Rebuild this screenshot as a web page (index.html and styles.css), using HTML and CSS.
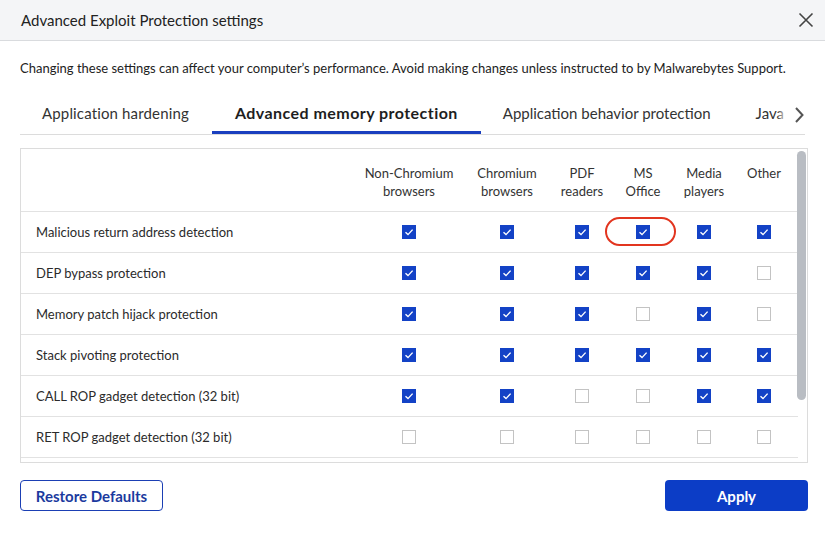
FILE: index.html
```html
<!DOCTYPE html>
<html lang="en">

<head>
    <meta charset="UTF-8">
    <meta name="viewport" content="width=device-width, initial-scale=1.0">
    <title>Advanced Exploit Protection settings</title>

    <link rel="stylesheet" href="styles.css">
</head>

<body>
    <div class="titlebar">
        <span class="title">Advanced Exploit Protection settings</span>
        <svg class="close" width="16" height="16" viewBox="0 0 16 16">
            <path d="M1.5 1.5 L14.5 14.5 M14.5 1.5 L1.5 14.5" stroke="#444" stroke-width="1.6" fill="none" />
        </svg>
    </div>

    <p class="desc">Changing these settings can affect your computer’s performance. Avoid making changes unless instructed to by Malwarebytes Support.</p>

    <div class="tabs">
        <div class="tab-strip">
            <span class="tab first">Application hardening</span>
            <span class="tab active">Advanced memory protection</span>
            <span class="tab">Application behavior protection</span>
            <span class="tab">Java</span>
        </div>
        <div class="tab-more">
            <svg width="12" height="18" viewBox="0 0 12 18">
                <path d="M3 2 L9.5 9 L3 16" stroke="#555" stroke-width="2" fill="none" />
            </svg>
        </div>
    </div>

    <div class="table-box">
        <div class="grid head">
            <div class="label"></div>
            <div class="col">Non-Chromium<br>browsers</div>
            <div class="col">Chromium<br>browsers</div>
            <div class="col">PDF<br>readers</div>
            <div class="col">MS<br>Office</div>
            <div class="col">Media<br>players</div>
            <div class="col">Other</div>
        </div>

        <div class="grid row">
            <div class="label">Malicious return address detection</div>
            <div class="cell"><span class="box on"></span></div>
            <div class="cell"><span class="box on"></span></div>
            <div class="cell"><span class="box on"></span></div>
            <div class="cell"><span class="box on"></span><span class="ring"></span></div>
            <div class="cell"><span class="box on"></span></div>
            <div class="cell"><span class="box on"></span></div>
        </div>

        <div class="grid row">
            <div class="label">DEP bypass protection</div>
            <div class="cell"><span class="box on"></span></div>
            <div class="cell"><span class="box on"></span></div>
            <div class="cell"><span class="box on"></span></div>
            <div class="cell"><span class="box on"></span></div>
            <div class="cell"><span class="box on"></span></div>
            <div class="cell"><span class="box"></span></div>
        </div>

        <div class="grid row">
            <div class="label">Memory patch hijack protection</div>
            <div class="cell"><span class="box on"></span></div>
            <div class="cell"><span class="box on"></span></div>
            <div class="cell"><span class="box on"></span></div>
            <div class="cell"><span class="box"></span></div>
            <div class="cell"><span class="box on"></span></div>
            <div class="cell"><span class="box"></span></div>
        </div>

        <div class="grid row">
            <div class="label">Stack pivoting protection</div>
            <div class="cell"><span class="box on"></span></div>
            <div class="cell"><span class="box on"></span></div>
            <div class="cell"><span class="box on"></span></div>
            <div class="cell"><span class="box on"></span></div>
            <div class="cell"><span class="box on"></span></div>
            <div class="cell"><span class="box on"></span></div>
        </div>

        <div class="grid row">
            <div class="label">CALL ROP gadget detection (32 bit)</div>
            <div class="cell"><span class="box on"></span></div>
            <div class="cell"><span class="box on"></span></div>
            <div class="cell"><span class="box"></span></div>
            <div class="cell"><span class="box"></span></div>
            <div class="cell"><span class="box on"></span></div>
            <div class="cell"><span class="box on"></span></div>
        </div>

        <div class="grid row">
            <div class="label">RET ROP gadget detection (32 bit)</div>
            <div class="cell"><span class="box"></span></div>
            <div class="cell"><span class="box"></span></div>
            <div class="cell"><span class="box"></span></div>
            <div class="cell"><span class="box"></span></div>
            <div class="cell"><span class="box"></span></div>
            <div class="cell"><span class="box"></span></div>
        </div>

        <div class="grid row last">
            <div class="label"></div>
        </div>

        <div class="scrollbar"></div>
    </div>

    <div class="actions">
        <button type="button" class="btn outline">Restore Defaults</button>
        <button type="button" class="btn primary">Apply</button>
    </div>
</body>

</html>
```

FILE: styles.css
```css
body {
    margin: 0;
    background: #fff;
    font-family: Lato, "Noto Sans", sans-serif;
    color: #2b2b2b;
}

.titlebar {
    height: 40px;
    padding: 0 11px 0 21px;
    display: flex;
    align-items: center;
    justify-content: space-between;
    background: #f4f5f7;
    border-bottom: 1px solid #d9dbde;
}

.title {
    font-size: 15px;
    color: #222;
}

.desc {
    margin: 0;
    padding: 18px 20px 0;
    font-size: 13px;
    line-height: 18px;
    color: #222;
}

.tabs {
    position: relative;
    margin: 12px 20px 0;
    width: 785px;
    border-bottom: 1px solid #dcdcdc;
    overflow: hidden;
}

.tab-strip {
    display: flex;
    white-space: nowrap;
}

.tab {
    padding: 14px 23px 8px 22px;
    font-size: 15px;
    line-height: 20px;
    color: #333;
    border-bottom: 3px solid transparent;
}

.tab.first {
    letter-spacing: 0.15px;
}

.tab.active {
    font-size: 16px;
    font-weight: bold;
    letter-spacing: 0.45px;
    color: #1e1e1e;
    border-bottom-color: #1a3fbf;
    padding-left: 23px;
}

.tab-more {
    position: absolute;
    right: 0;
    top: 0;
    bottom: 0;
    width: 40px;
    display: flex;
    align-items: center;
    justify-content: flex-end;
    padding-top: 6px;
    box-sizing: border-box;
    background: linear-gradient(to right, rgba(255, 255, 255, 0) 0, rgba(255, 255, 255, 0) 12px, rgba(255, 255, 255, 0.8) 20px, #fff 26px);
}

.table-box {
    position: relative;
    margin: 13px 0 0 20px;
    width: 786px;
    height: 313px;
    border: 1px solid #dcdcdc;
    overflow: hidden;
}

.grid {
    display: grid;
    grid-template-columns: 339px 98px 98px 52px 70px 52px 68px;
    width: 777px;
}

.head {
    height: 62px;
    box-sizing: border-box;
    padding-top: 15px;
    font-size: 13px;
    line-height: 18px;
    color: #333;
}

.col {
    text-align: center;
}

.row {
    height: 40px;
    align-items: center;
    border-top: 1px solid #e2e2e2;
    font-size: 13px;
    color: #2b2b2b;
}

.label {
    padding-left: 15px;
}

.cell {
    position: relative;
    display: flex;
    justify-content: center;
}

.box {
    width: 14px;
    height: 14px;
    box-sizing: border-box;
    border: 1px solid #c3c3c3;
    background: #fff;
}

.box.on {
    border: none;
    background: #1342c6 url("data:image/svg+xml,%3Csvg xmlns='http://www.w3.org/2000/svg' width='14' height='14'%3E%3Cpath d='M3.5 7.3 L6 9.6 L10.6 4.6' stroke='white' stroke-width='1.4' fill='none'/%3E%3C/svg%3E") no-repeat center;
}

.ring {
    position: absolute;
    left: -3px;
    top: -8px;
    width: 71px;
    height: 29px;
    box-sizing: border-box;
    border: 2px solid #e2351f;
    border-radius: 15px;
}

.scrollbar {
    position: absolute;
    left: 776px;
    top: 2px;
    width: 9px;
    height: 249px;
    border-radius: 5px;
    background: #b9bdc3;
}

.actions {
    display: flex;
    justify-content: space-between;
    margin: 17px 0 0 20px;
    width: 788px;
}

.btn {
    width: 143px;
    height: 31px;
    border-radius: 4px;
    font-family: Lato, "Noto Sans", sans-serif;
    font-size: 15px;
    font-weight: bold;
    cursor: pointer;
}

.btn.outline {
    background: #fff;
    color: #1b3a9e;
    border: 1px solid #1b3fb4;
}

.btn.primary {
    background: #0c3dc6;
    color: #fff;
    border: none;
}
```
